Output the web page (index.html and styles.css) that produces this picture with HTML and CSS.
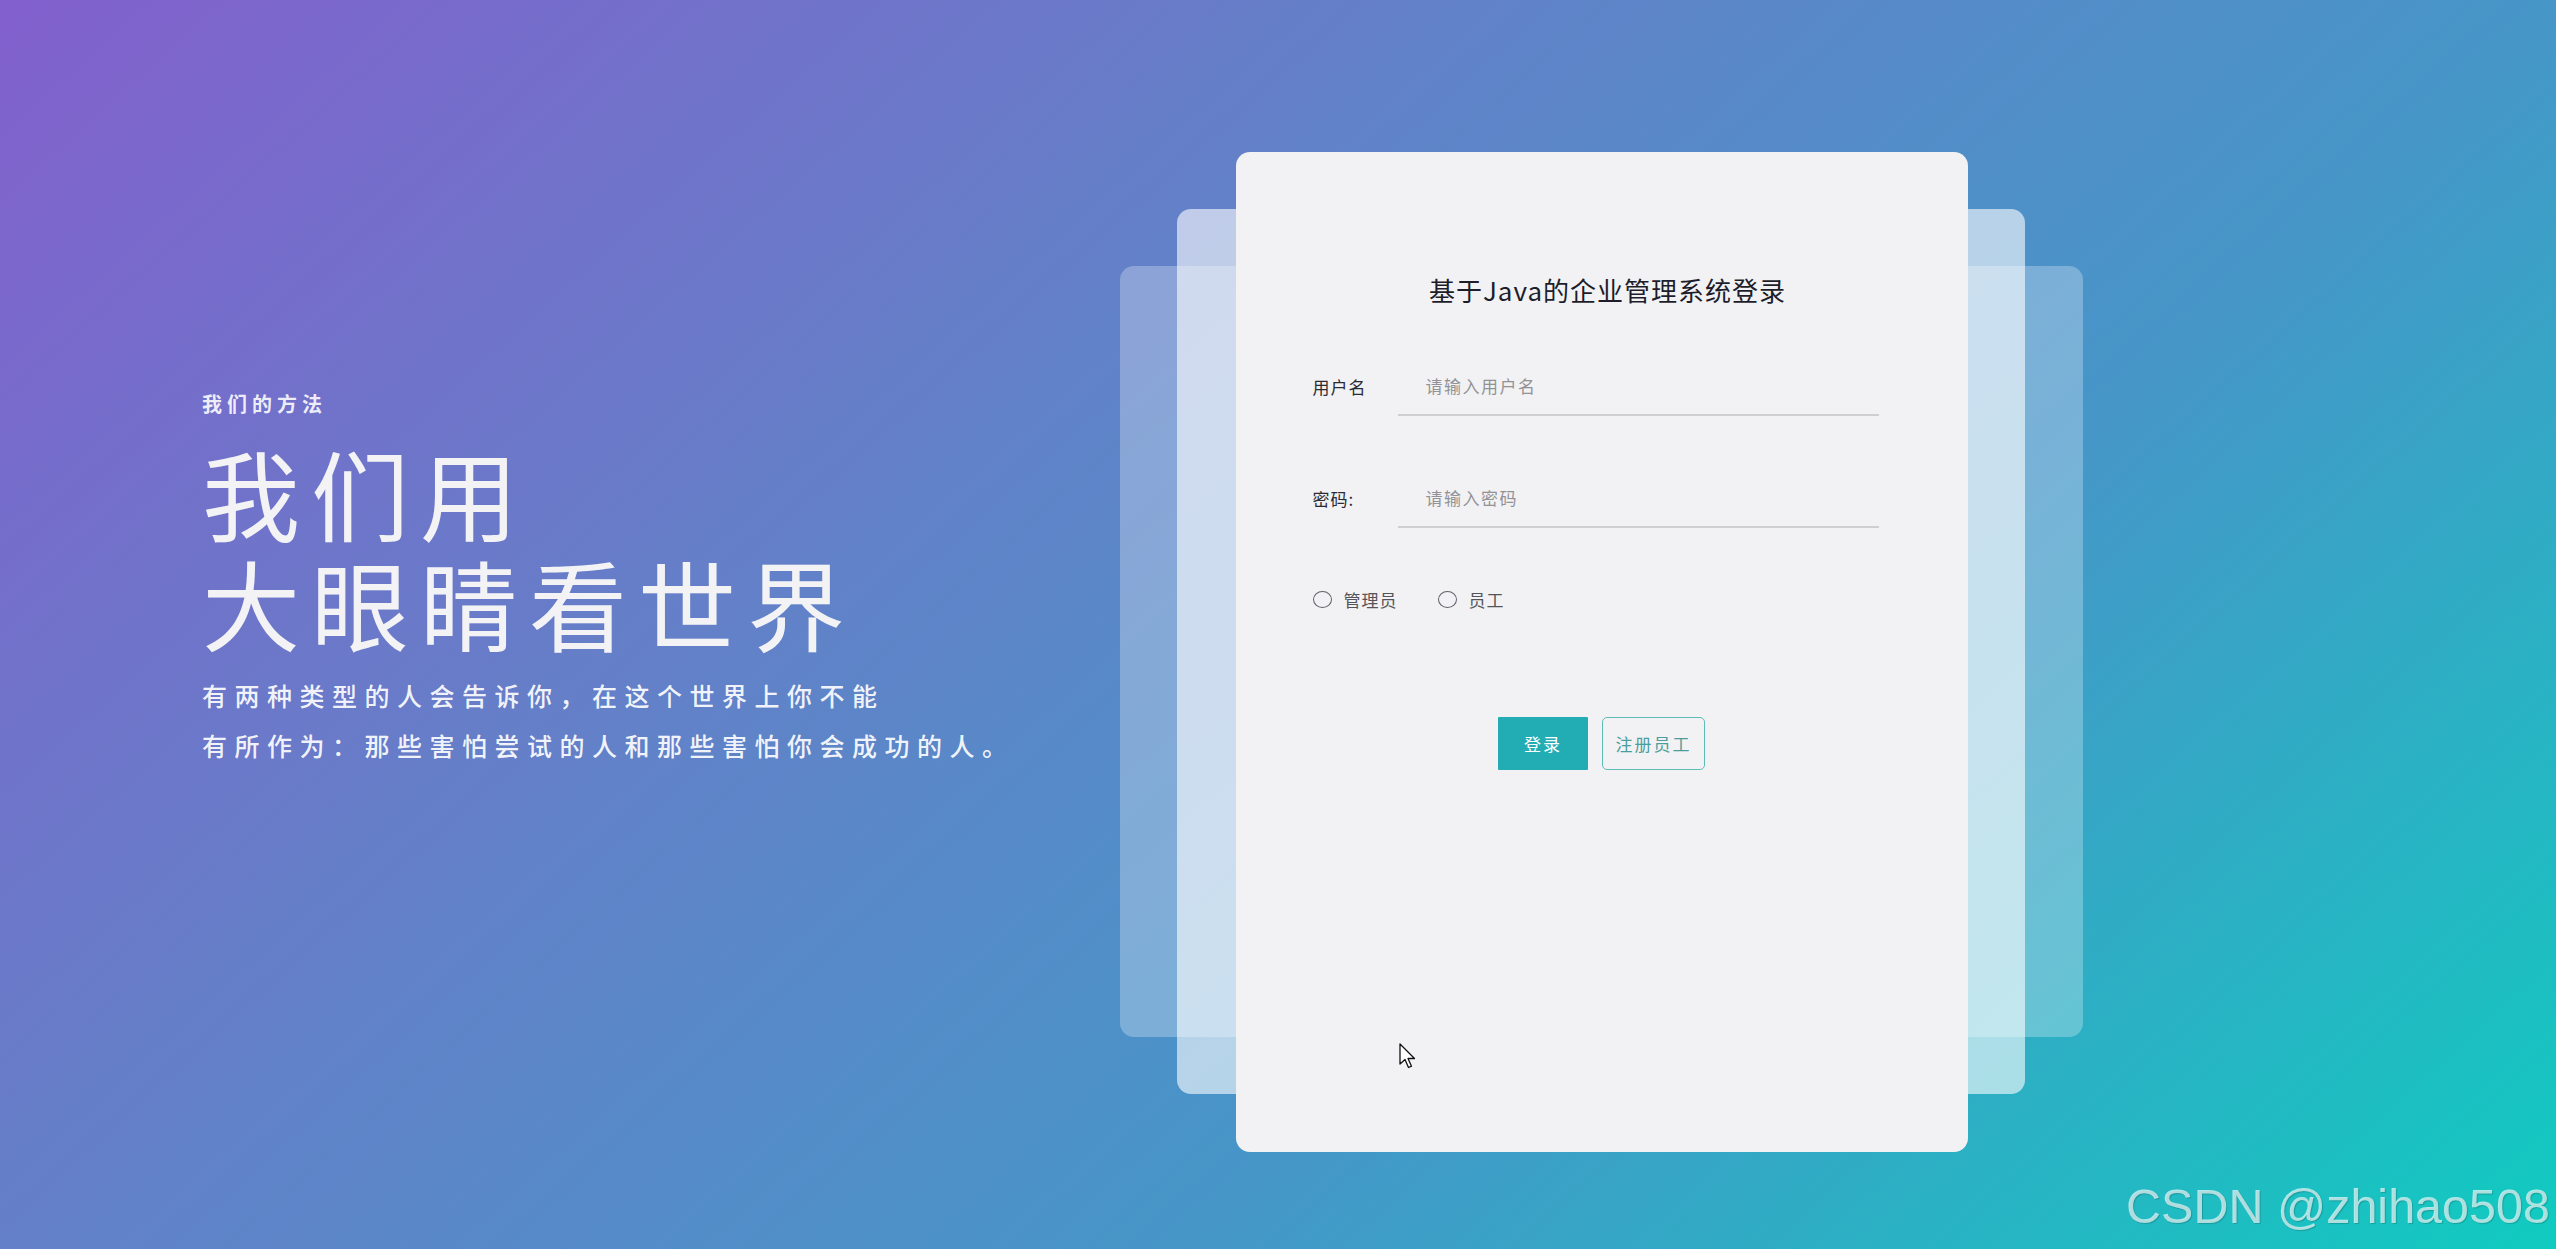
FILE: index.html
```html
<!DOCTYPE html>
<html lang="zh-CN">
<head>
<meta charset="utf-8">
<title>基于Java的企业管理系统登录</title>
<link rel="stylesheet" href="styles.css">
</head>
<body>
<div class="page">
  <section class="hero">
    <p class="hero-kicker">我们的方法</p>
    <h1 class="hero-title">
      <span class="hero-line">我们用</span>
      <span class="hero-line">大眼睛看世界</span>
    </h1>
    <p class="hero-text">
      <span class="hero-text-line">有两种类型的人会告诉你，在这个世界上你不能</span>
      <span class="hero-text-line">有所作为：那些害怕尝试的人和那些害怕你会成功的人。</span>
    </p>
  </section>

  <section class="stack">
    <div class="layer layer-back"></div>
    <div class="layer layer-mid"></div>
    <div class="card">
      <h2 class="card-title">基于Java的企业管理系统登录</h2>
      <div class="field">
        <label class="field-label">用户名</label>
        <div class="field-input"><span class="placeholder">请输入用户名</span></div>
      </div>
      <div class="field field-second">
        <label class="field-label">密码:</label>
        <div class="field-input"><span class="placeholder">请输入密码</span></div>
      </div>
      <div class="roles">
        <span class="role"><span class="radio"></span><span class="role-text">管理员</span></span>
        <span class="role"><span class="radio"></span><span class="role-text">员工</span></span>
      </div>
      <div class="actions">
        <button class="btn btn-primary">登录</button>
        <button class="btn btn-outline">注册员工</button>
      </div>
      <svg class="cursor" width="18" height="27" viewBox="0 0 18 27">
        <path d="M1 1 L1 21 L6 16.5 L9.5 24.5 L12.5 23.2 L9 15.5 L15.5 15.5 Z" fill="#ffffff" stroke="#111111" stroke-width="1.3" stroke-linejoin="round"/>
      </svg>
    </div>
  </section>
</div>
<div class="watermark">CSDN @zhihao508</div>
</body>
</html>
```

FILE: styles.css
```css
html, body {
  margin: 0;
  padding: 0;
}

body {
  width: 100vw;
  height: 100vh;
  overflow: hidden;
  font-family: "Noto Sans CJK SC", "Noto Sans", sans-serif;
  background: linear-gradient(138deg, #8260cd 0%, #6480c8 35%, #4696c8 65%, #10cbc0 100%);
  position: relative;
}

.page {
  display: flex;
  align-items: flex-start;
  height: 100%;
}

/* ---------- left hero ---------- */
.hero {
  width: 1120px;
  box-sizing: border-box;
  padding: 390px 0 0 202px;
  color: #f4f4f8;
}

.hero-kicker {
  margin: 0;
  font-size: 20px;
  line-height: 28px;
  font-weight: 700;
  letter-spacing: 5px;
  color: rgba(255, 255, 255, 0.88);
}

.hero-title {
  margin: 27px 0 0;
  font-family: "Liberation Sans", "Noto Sans CJK SC", sans-serif;
  font-size: 98px;
  font-weight: 400;
  letter-spacing: 11px;
  color: #f3f3f6;
}

.hero-line {
  display: block;
  height: 110px;
  line-height: 110px;
}

.hero-text {
  margin: 5px 0 0;
  font-size: 25px;
  font-weight: 500;
  letter-spacing: 7.5px;
  color: rgba(255, 255, 255, 0.92);
  white-space: nowrap;
}

.hero-text-line {
  display: block;
  height: 50px;
  line-height: 50px;
}

/* ---------- card stack ---------- */
.stack {
  position: relative;
  width: 963px;
  height: 1000px;
  margin-top: 152px;
}

.layer {
  position: absolute;
  border-radius: 14px;
}

.layer-back {
  left: 0;
  right: 0;
  top: 114px;
  bottom: 115px;
  background: rgba(255, 255, 255, 0.27);
}

.layer-mid {
  left: 57px;
  right: 58px;
  top: 57px;
  bottom: 58px;
  background: rgba(255, 255, 255, 0.6);
}

.card {
  position: relative;
  width: 732px;
  height: 1000px;
  margin: 0 auto;
  box-sizing: border-box;
  padding: 120px 89px 0 77px;
  background: #f2f2f4;
  border-radius: 14px;
  display: flex;
  flex-direction: column;
}

.card-title {
  margin: 0;
  padding-left: 24px;
  text-align: center;
  font-size: 26px;
  line-height: 36px;
  font-weight: 400;
  letter-spacing: 1px;
  color: #1d1d2b;
}

.field {
  display: flex;
  align-items: center;
  margin-top: 49px;
}

.field-second {
  margin-top: 53px;
}

.field-label {
  width: 85px;
  flex: none;
  font-size: 17px;
  letter-spacing: 1px;
  color: #2b2b33;
}

.field-input {
  flex: 1;
  height: 57px;
  box-sizing: content-box;
  padding-left: 28px;
  display: flex;
  align-items: center;
  border-bottom: 2px solid #cfcfd2;
}

.placeholder {
  font-size: 17px;
  letter-spacing: 1.5px;
  color: #929296;
}

.roles {
  display: flex;
  align-items: center;
  gap: 40px;
  margin-top: 61px;
  height: 20px;
}

.role {
  display: flex;
  align-items: center;
  gap: 12px;
}

.radio {
  width: 17px;
  height: 15px;
  border: 1.5px solid #606066;
  border-radius: 50%;
}

.role-text {
  font-size: 17px;
  letter-spacing: 1px;
  color: #555559;
}

.actions {
  display: flex;
  justify-content: center;
  gap: 14px;
  margin-top: 108px;
  padding-left: 12px;
}

.btn {
  height: 53px;
  box-sizing: border-box;
  font-family: "Noto Sans CJK SC", sans-serif;
  font-size: 17px;
  letter-spacing: 2px;
  cursor: pointer;
}

.btn-primary {
  width: 90px;
  border: none;
  border-radius: 1px;
  background: #22adb5;
  color: #ffffff;
}

.btn-outline {
  width: 103px;
  border: 1.5px solid #5dbdb6;
  border-radius: 5px;
  background: transparent;
  color: #4b9e9c;
}

.cursor {
  position: absolute;
  left: 163px;
  top: 891px;
}

/* ---------- watermark ---------- */
.watermark {
  position: absolute;
  right: 6px;
  bottom: 18px;
  font-family: "Liberation Sans", Arial, sans-serif;
  font-size: 48.5px;
  line-height: 49px;
  color: rgba(255, 255, 255, 0.66);
  text-shadow: 1px 1px 1px rgba(0, 0, 0, 0.18);
}
```
